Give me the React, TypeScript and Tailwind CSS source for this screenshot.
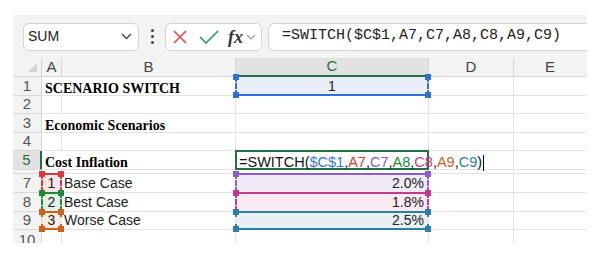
import React from 'react';

// Range highlight drawn over a referenced cell (formula edit mode)
function RefBox({ line, dash, square, bottom = true, top = true }: { line: string; dash: string; square: string; bottom?: boolean; top?: boolean }) {
  return (
    <div className="absolute -inset-px z-10 pointer-events-none">
      <div className={`absolute inset-0 border-x-2 border-dashed ${dash}`} />
      <div className={`absolute inset-0 ${top ? 'border-t-2' : ''} ${bottom ? 'border-b-2' : ''} border-solid ${line}`} />
      {top && <span className={`absolute -top-[2px] -left-[2px] w-[6px] h-[6px] ${square}`} />}
      {top && <span className={`absolute -top-[2px] -right-[2px] w-[6px] h-[6px] ${square}`} />}
      {bottom && <span className={`absolute -bottom-[2px] -left-[2px] w-[6px] h-[6px] ${square}`} />}
      {bottom && <span className={`absolute -bottom-[2px] -right-[2px] w-[6px] h-[6px] ${square}`} />}
    </div>
  );
}

function RowHead({ n, active = false, h }: { n: string; active?: boolean; h: string }) {
  return (
    <div
      className={`w-[29px] shrink-0 ${h} overflow-hidden flex items-center justify-center text-[15px] border-b border-[#dadada] ${
        active ? 'bg-[#e2e2e2] text-[#1e7145] border-r-2 border-r-[#1e7145]' : 'bg-[#f3f3f3] text-[#555] border-r border-r-[#d6d6d6]'
      }`}
    >
      {n}
    </div>
  );
}

const cell = 'relative shrink-0 border-b border-[#e3e3e3]';

export default function App() {
  const sans = { fontFamily: '"Liberation Sans", Arial, sans-serif' };
  return (
    <div className="w-[600px] h-[259px] bg-white overflow-hidden pt-[15px] pl-[13px]" style={sans}>
      <div className="w-[574px]">
        {/* Formula toolbar */}
        <div className="h-[43px] bg-[#f3f3f3] flex items-center pl-[10px]">
          <div className="w-[116px] h-[28px] bg-white border border-[#d4d4d4] rounded-md flex items-center justify-between pl-[4px] pr-[6px]">
            <span className="text-[14px] text-[#222]">SUM</span>
            <svg width="11" height="7" viewBox="0 0 11 7" fill="none" stroke="#444" strokeWidth="1.4">
              <path d="M1 1l4.5 4.5L10 1" />
            </svg>
          </div>
          <div className="w-[26px] flex flex-col items-center gap-[3px]">
            <span className="w-[3px] h-[3px] rounded-full bg-[#444]" />
            <span className="w-[3px] h-[3px] rounded-full bg-[#444]" />
            <span className="w-[3px] h-[3px] rounded-full bg-[#444]" />
          </div>
          <div className="w-[97px] h-[28px] bg-white border border-[#d4d4d4] rounded-md flex items-center pl-[7px]">
            <svg width="14" height="14" viewBox="0 0 14 14" fill="none" stroke="#e5484d" strokeWidth="1.6">
              <path d="M1 1l12 12M13 1L1 13" />
            </svg>
            <svg width="20" height="14" viewBox="0 0 20 14" fill="none" stroke="#2f9a4a" strokeWidth="1.6" className="ml-[12px]">
              <path d="M1 7l6 6L19 1" />
            </svg>
            <span className="ml-[9px] text-[18px] italic font-bold text-[#333] leading-none" style={{ fontFamily: '"Liberation Serif", serif' }}>
              fx
            </span>
            <svg width="10" height="6" viewBox="0 0 10 6" fill="none" stroke="#999" strokeWidth="1.2" className="ml-[3px]">
              <path d="M1 1l4 4 4-4" />
            </svg>
          </div>
          <div className="flex-1 ml-[6px] h-[28px] bg-white border border-r-0 border-[#d4d4d4] rounded-l-md flex items-center pl-[13px]">
            <span className="text-[15px] text-[#222]" style={{ fontFamily: '"Liberation Mono", monospace' }}>
              =SWITCH($C$1,A7,C7,A8,C8,A9,C9)
            </span>
          </div>
        </div>

        {/* Column headers */}
        <div className="flex h-[19px] text-[15px] text-[#444] bg-[#f3f3f3]">
          <div className="w-[29px] shrink-0 border-r border-b border-[#d6d6d6] flex items-end justify-end pr-[4px] pb-[4px]">
            <svg width="9" height="9" viewBox="0 0 9 9">
              <path d="M9 0V9H0Z" fill="#d4d4d4" />
            </svg>
          </div>
          <div className="w-[20px] shrink-0 border-r border-b border-[#d6d6d6] flex items-center justify-center">A</div>
          <div className="w-[174px] shrink-0 border-r border-b border-[#d6d6d6] flex items-center justify-center">B</div>
          <div className="w-[193px] shrink-0 bg-[#e2e2e2] text-[#1e7145] border-r border-[#d6d6d6] border-b-2 border-b-[#1e7145] flex items-center justify-center">C</div>
          <div className="w-[85px] shrink-0 border-r border-b border-[#d6d6d6] flex items-center justify-center">D</div>
          <div className="w-[72px] shrink-0 border-b border-[#d6d6d6] flex items-center justify-center">E</div>
        </div>

        {/* Row 1 */}
        <div className="flex h-[19px]">
          <RowHead n="1" h="h-[19px]" />
          <div className={`${cell} w-[20px]`}>
            <span className="absolute left-[3px] top-[1px] z-20 whitespace-nowrap text-[14px] font-bold text-black" style={{ fontFamily: '"Liberation Serif", serif' }}>
              SCENARIO SWITCH
            </span>
          </div>
          <div className={`${cell} w-[174px] border-r`} />
          <div className={`${cell} w-[193px] border-r bg-[#e9eef9] flex items-center justify-center text-[14px] text-[#222]`}>
            1
            <RefBox top={false} line="border-[#2f6fd6]" dash="border-[#2f6fd6]" square="bg-[#2f6fd6]" />
            <span className="absolute -top-[3px] -left-[3px] w-[6px] h-[6px] bg-[#2f6fd6] z-20" />
            <span className="absolute -top-[3px] -right-[3px] w-[6px] h-[6px] bg-[#2f6fd6] z-20" />
          </div>
          <div className={`${cell} w-[85px] border-r`} />
          <div className={`${cell} w-[72px]`} />
        </div>

        {/* Row 2 */}
        <div className="flex h-[18px]">
          <RowHead n="2" h="h-[18px]" />
          <div className={`${cell} w-[20px] border-r`} />
          <div className={`${cell} w-[174px] border-r`} />
          <div className={`${cell} w-[193px] border-r`} />
          <div className={`${cell} w-[85px] border-r`} />
          <div className={`${cell} w-[72px]`} />
        </div>

        {/* Row 3 */}
        <div className="flex h-[19px]">
          <RowHead n="3" h="h-[19px]" />
          <div className={`${cell} w-[20px]`}>
            <span className="absolute left-[3px] top-[1px] z-20 whitespace-nowrap text-[14px] font-bold text-black" style={{ fontFamily: '"Liberation Serif", serif' }}>
              Economic Scenarios
            </span>
          </div>
          <div className={`${cell} w-[174px] border-r`} />
          <div className={`${cell} w-[193px] border-r`} />
          <div className={`${cell} w-[85px] border-r`} />
          <div className={`${cell} w-[72px]`} />
        </div>

        {/* Row 4 */}
        <div className="flex h-[18px]">
          <RowHead n="4" h="h-[18px]" />
          <div className={`${cell} w-[20px] border-r`} />
          <div className={`${cell} w-[174px] border-r`} />
          <div className={`${cell} w-[193px] border-r`} />
          <div className={`${cell} w-[85px] border-r`} />
          <div className={`${cell} w-[72px]`} />
        </div>

        {/* Row 5 - editing cell */}
        <div className="flex h-[19px]">
          <RowHead n="5" active h="h-[19px]" />
          <div className={`${cell} w-[20px]`}>
            <span className="absolute left-[3px] top-[1px] z-20 whitespace-nowrap text-[14px] font-bold text-black" style={{ fontFamily: '"Liberation Serif", serif' }}>
              Cost Inflation
            </span>
          </div>
          <div className={`${cell} w-[174px] border-r`} />
          <div className={`${cell} w-[193px] border-r`}>
            <div className="absolute -inset-px border-2 border-[#1e7145] z-20" />
            <span className="absolute left-[3px] top-[1px] z-30 whitespace-nowrap text-[14.5px] text-[#111] flex items-center">
              =SWITCH(<span className="text-[#3a73d6]">$C$1</span>,<span className="text-[#d9363e]">A7</span>,
              <span className="text-[#8d5bd0]">C7</span>,<span className="text-[#23883c]">A8</span>,
              <span className="text-[#c43a86]">C8</span>,<span className="text-[#c9621c]">A9</span>,
              <span className="text-[#2b7fa5]">C9</span>)<span className="ml-px w-px h-[16px] bg-black" />
            </span>
          </div>
          <div className={`${cell} w-[85px] border-r`} />
          <div className={`${cell} w-[72px]`} />
        </div>

        {/* Row 6 (collapsed) */}
        <div className="flex h-[4px]">
          <div className="w-[29px] shrink-0 h-[4px] overflow-hidden bg-[#f3f3f3] border-r border-b border-[#d6d6d6]" />
          <div className={`${cell} w-[20px] border-r`} />
          <div className={`${cell} w-[174px] border-r`} />
          <div className={`${cell} w-[193px] border-r`} />
          <div className={`${cell} w-[85px] border-r`} />
          <div className={`${cell} w-[72px]`} />
        </div>

        {[
          { n: '7', h: 'h-[19px]', v: '1', label: 'Base Case', pct: '2.0%', aBg: 'bg-[#fbe6e7]', aLine: 'border-[#d9363e]', aSq: 'bg-[#d9363e]', cBg: 'bg-[#f1ebf8]', cLine: 'border-[#8d5bd0]', cSq: 'bg-[#8d5bd0]', last: false },
          { n: '8', h: 'h-[19px]', v: '2', label: 'Best Case', pct: '1.8%', aBg: 'bg-[#e4f1e7]', aLine: 'border-[#23883c]', aSq: 'bg-[#23883c]', cBg: 'bg-[#f9e9f1]', cLine: 'border-[#c43a86]', cSq: 'bg-[#c43a86]', last: false },
          { n: '9', h: 'h-[18px]', v: '3', label: 'Worse Case', pct: '2.5%', aBg: 'bg-[#fbece2]', aLine: 'border-[#c9621c]', aSq: 'bg-[#c9621c]', cBg: 'bg-[#e8f0f3]', cLine: 'border-[#2b7fa5]', cSq: 'bg-[#2b7fa5]', last: true },
        ].map((r) => (
          <div key={r.n} className={`flex ${r.h}`}>
            <RowHead n={r.n} h={r.h} />
            <div className={`${cell} w-[20px] border-r ${r.aBg} flex items-center justify-center text-[14px] text-[#222]`}>
              {r.v}
              <RefBox bottom={r.last} line={r.aLine} dash={r.aLine} square={r.aSq} />
            </div>
            <div className={`${cell} w-[174px] border-r flex items-center pl-[2px] text-[14px] text-[#222]`}>{r.label}</div>
            <div className={`${cell} w-[193px] border-r ${r.cBg} flex items-center justify-end pr-[4px] text-[14px] text-[#222]`}>
              {r.pct}
              <RefBox bottom={r.last} line={r.cLine} dash={r.cLine} square={r.cSq} />
            </div>
            <div className={`${cell} w-[85px] border-r`} />
            <div className={`${cell} w-[72px]`} />
          </div>
        ))}

        {/* Row 10 (cut off) */}
        <div className="flex h-[13px]">
          <div className="w-[29px] shrink-0 h-[13px] overflow-hidden bg-[#f3f3f3] border-r border-[#d6d6d6] flex justify-center text-[15px] text-[#555] leading-none pt-[2px]">
            10
          </div>
          <div className="relative shrink-0 w-[20px] border-r border-[#e3e3e3]" />
          <div className="relative shrink-0 w-[174px] border-r border-[#e3e3e3]" />
          <div className="relative shrink-0 w-[193px] border-r border-[#e3e3e3]" />
          <div className="relative shrink-0 w-[85px] border-r border-[#e3e3e3]" />
          <div className="relative shrink-0 w-[72px]" />
        </div>
      </div>
    </div>
  );
}
